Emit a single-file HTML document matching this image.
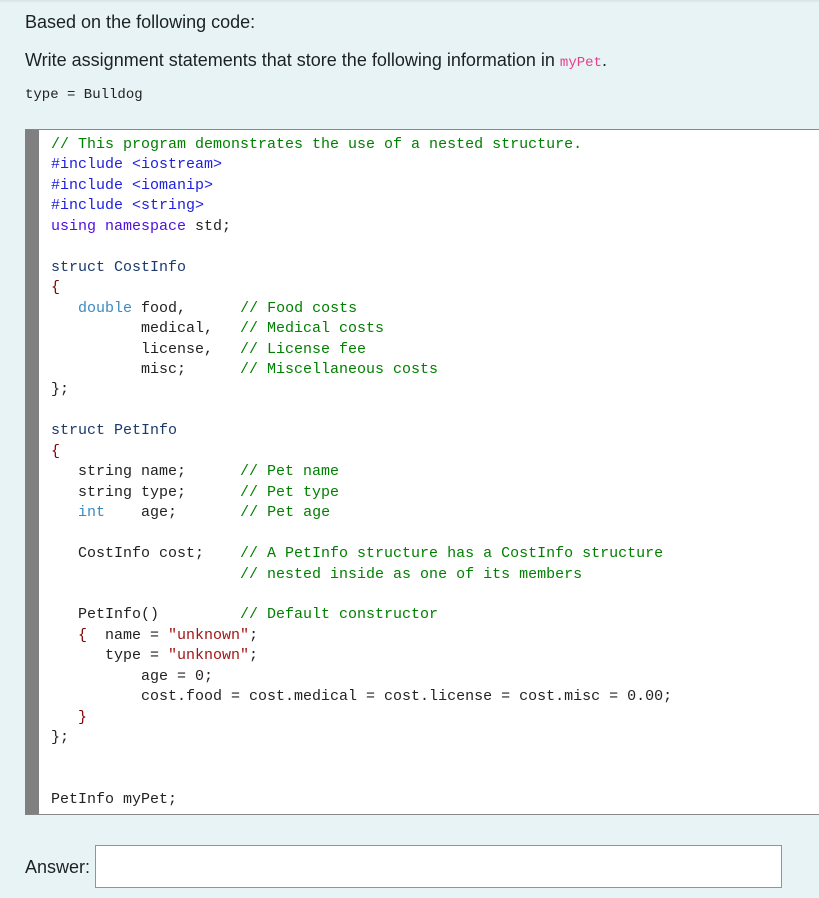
<!DOCTYPE html>
<html><head><style>
body{margin:0;background:#e7f3f5;width:819px;height:898px;overflow:hidden;font-family:"Liberation Sans",sans-serif;color:#1d2125;position:relative}
.t{position:absolute;left:25px;font-size:18px;white-space:nowrap}
.m{font-family:"Liberation Mono",monospace}
pre{position:absolute;left:25px;top:129px;width:794px;height:686px;margin:0;background:#fff;border-top:1px solid #8a8a8a;border-bottom:1px solid #8a8a8a;border-left:14px solid #808080;box-sizing:border-box;padding:5px 0 0 12px;font-family:"Liberation Mono",monospace;font-size:15px;line-height:20.45px;color:#222}
.c{color:#008000}.p{color:#2020e0}.k{color:#3a8ac0}.u{color:#5010e0}.s{color:#1a3a6a}.r{color:#a31515}.b{color:#800000}
.box{position:absolute;left:95px;top:845px;width:687px;height:43px;background:#fff;border:1px solid #8f959e;box-sizing:border-box}
</style></head><body>
<div style="position:absolute;left:0;top:0;width:819px;height:3px;background:linear-gradient(#d8e2e6,#e7f3f5)"></div>
<div class="t" style="top:12px">Based on the following code:</div>
<div class="t" style="top:50px">Write assignment statements that store the following information in <span class="m" style="color:#e83e8c;font-size:14px">myPet</span>.</div>
<div class="t m" style="top:87px;font-size:14px;color:#222">type = Bulldog</div>
<pre><span class="c">// This program demonstrates the use of a nested structure.</span>
<span class="p">#include &lt;iostream&gt;</span>
<span class="p">#include &lt;iomanip&gt;</span>
<span class="p">#include &lt;string&gt;</span>
<span class="u">using namespace</span> std;

<span class="s">struct CostInfo</span>
<span class="b">{</span>
   <span class="k">double</span> food,      <span class="c">// Food costs</span>
          medical,   <span class="c">// Medical costs</span>
          license,   <span class="c">// License fee</span>
          misc;      <span class="c">// Miscellaneous costs</span>
};

<span class="s">struct PetInfo</span>
<span class="b">{</span>
   string name;      <span class="c">// Pet name</span>
   string type;      <span class="c">// Pet type</span>
   <span class="k">int</span>    age;       <span class="c">// Pet age</span>

   CostInfo cost;    <span class="c">// A PetInfo structure has a CostInfo structure</span>
                     <span class="c">// nested inside as one of its members</span>

   PetInfo()         <span class="c">// Default constructor</span>
   <span class="b">{</span>  name = <span class="r">"unknown"</span>;
      type = <span class="r">"unknown"</span>;
          age = 0;
          cost.food = cost.medical = cost.license = cost.misc = 0.00;
   <span class="b">}</span>
};


PetInfo myPet;</pre>
<div class="t" style="top:857px">Answer:</div>
<div class="box"></div>
</body></html>
